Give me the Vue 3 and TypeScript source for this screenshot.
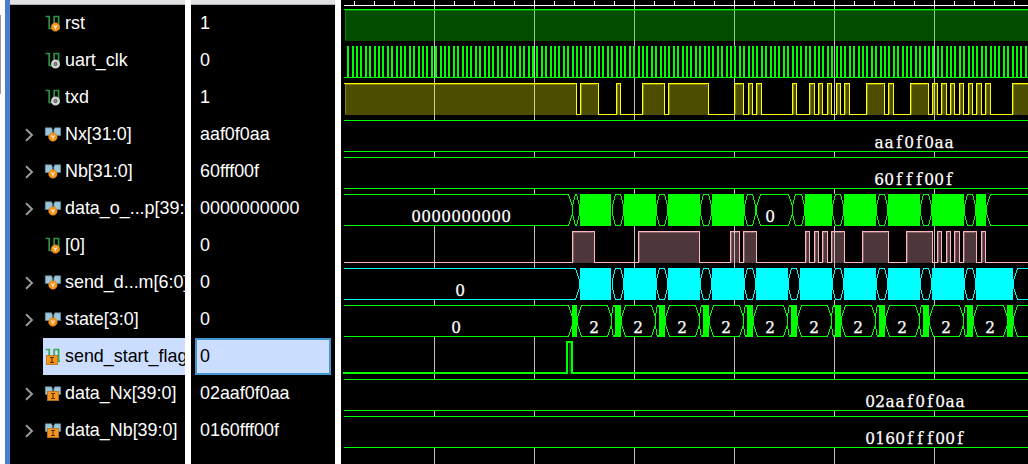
<script setup lang="ts">
type Icon = 'bit' | 'bus'
type Badge = 'v' | 'o' | 'i'
interface Signal {
  name: string
  value: string
  icon: Icon
  badge: Badge
  selected?: boolean
}

const signals: Signal[] = [
  { name: 'rst', value: '1', icon: 'bit', badge: 'v' },
  { name: 'uart_clk', value: '0', icon: 'bit', badge: 'o' },
  { name: 'txd', value: '1', icon: 'bit', badge: 'o' },
  { name: 'Nx[31:0]', value: 'aaf0f0aa', icon: 'bus', badge: 'v' },
  { name: 'Nb[31:0]', value: '60fff00f', icon: 'bus', badge: 'v' },
  { name: 'data_o_...p[39:0]', value: '0000000000', icon: 'bus', badge: 'v' },
  { name: '[0]', value: '0', icon: 'bit', badge: 'v' },
  { name: 'send_d...m[6:0]', value: '0', icon: 'bus', badge: 'v' },
  { name: 'state[3:0]', value: '0', icon: 'bus', badge: 'v' },
  { name: 'send_start_flag', value: '0', icon: 'bit', badge: 'i', selected: true },
  { name: 'data_Nx[39:0]', value: '02aaf0f0aa', icon: 'bus', badge: 'i' },
  { name: 'data_Nb[39:0]', value: '0160fff00f', icon: 'bus', badge: 'i' },
]

const END = 1030
const top = (row: number) => 9 + 37 * row
const grid = [434, 534, 634, 734, 834, 934]
const ticks = Array.from({ length: 34 }, (_, i) => 354 + 20 * i)
const clock = Array.from({ length: 155 }, (_, i) => Math.floor(347.6 + 4.4 * i + 0.001))

type Span = [number, number]
interface Level { row: number; color: string; spans: Span[] }

const levels: Level[] = [
  { row: 0, color: '#00ff00', spans: [[344, END]] },
  {
    row: 2, color: '#ffff00',
    spans: [[344, 576], [580, 598], [616, 620], [642, 664], [668, 708], [734, 743], [748, 752], [756, 761],
      [792, 796], [809, 814], [818, 822], [827, 831], [836, 840], [844, 849], [866, 884], [888, 893], [910, 928],
      [932, 937], [941, 946], [950, 954], [959, 963], [968, 972], [976, 981], [985, 990], [1012, END]],
  },
  {
    row: 6, color: '#ffb6c1',
    spans: [[572, 594], [638, 699], [730, 739], [743, 756], [805, 809], [814, 818], [822, 827], [831, 844],
      [862, 888], [906, 932], [937, 941], [946, 950], [954, 959], [963, 976], [981, 985]],
  },
]

interface Bar { x: number; y: number; w: number; h: number }

// One-pixel bars that trace a level signal: baseline pieces, plateaus and edges.
function levelBars(l: Level): Bar[] {
  const hi = top(l.row)
  const lo = hi + 31
  const out: Bar[] = []
  let x = 344
  for (const [a, b] of l.spans) {
    if (a > x) out.push({ x, y: lo, w: a - x, h: 1 })
    out.push({ x: a, y: hi, w: b - a + 1, h: 1 })
    if (a !== 344) out.push({ x: a, y: hi, w: 1, h: 32 })
    if (b !== END) out.push({ x: b, y: hi, w: 1, h: 32 })
    x = b
  }
  if (x < END) out.push({ x, y: lo, w: END - x, h: 1 })
  return out
}

interface Bus { row: number; color: string; cells: Span[]; solid: Span[] }
const gaps = (from: number, to: number): Span[] => {
  const out: Span[] = []
  for (let x = from; x <= to; x += 44) out.push([x, x + 11])
  return out
}
const stateCells: Span[] = Array.from({ length: 10 }, (_, i) => [577 + 44 * i, 611 + 44 * i] as Span)

const buses: Bus[] = [
  { row: 3, color: '#00ff00', cells: [[300, 1100]], solid: [] },
  { row: 4, color: '#00ff00', cells: [[300, 1100]], solid: [] },
  {
    row: 5, color: '#00ff00',
    cells: [[300, 572], [572, 579], ...gaps(612, 744), [756, 792], [792, 804], ...gaps(832, 964), [986, 1100]],
    solid: [[580, 611], [624, 656], [668, 700], [712, 744], [805, 832], [844, 876], [888, 920], [932, 964], [976, 986]],
  },
  {
    row: 7, color: '#00ffff',
    cells: [[300, 579], ...gaps(612, 964), [1013, 1100]],
    solid: [[580, 611], [624, 656], [668, 700], [712, 744], [756, 788], [800, 832], [844, 876], [888, 920], [932, 964], [976, 1013]],
  },
  {
    row: 8, color: '#00ff00',
    cells: [[300, 572], ...stateCells, ...Array.from({ length: 9 }, (_, i) => [611 + 44 * i, 616 + 44 * i] as Span), [1013, 1100]],
    solid: [[572, 577], ...Array.from({ length: 9 }, (_, i) => [615 + 44 * i, 621 + 44 * i] as Span), [1007, 1013]],
  },
  { row: 10, color: '#00ff00', cells: [[300, 1100]], solid: [] },
  { row: 11, color: '#00ff00', cells: [[300, 1100]], solid: [] },
]

function cellInset([a, b]: Span): number {
  return b - a <= 13 ? Math.min(3, (b - a) / 2 - 0.5) : 4
}

// Slanted left and right ends of a bus cell.
function cellPath([a, b]: Span, row: number): string {
  const t = top(row) + 0.5
  const s = cellInset([a, b])
  const l = a + 0.5
  const r = b + 0.5
  const k = s - 1
  return `M${l + s} ${t}L${l + k} ${t + 3}L${l} ${t + 12}V${t + 19}L${l + k} ${t + 28}L${l + s} ${t + 31}` +
    `M${r - s} ${t}L${r - k} ${t + 3}L${r} ${t + 12}V${t + 19}L${r - k} ${t + 28}L${r - s} ${t + 31}`
}

// Horizontal extent of a cell's top and bottom lines, clipped to the pane.
function cellFlat(c: Span): { x: number; w: number } {
  const s = cellInset(c)
  const x = Math.max(344, c[0] + s)
  return { x, w: Math.max(1, Math.min(1028, c[1] - s + 1) - x) }
}

interface Label { row: number; x: number; text: string }
const labels: Label[] = [
  { row: 3, x: 879, text: 'aaf0f0aa' },
  { row: 4, x: 879, text: '60fff00f' },
  { row: 5, x: 416, text: '0000000000' },
  { row: 5, x: 770, text: '0' },
  { row: 7, x: 460, text: '0' },
  { row: 8, x: 456, text: '0' },
  ...Array.from({ length: 10 }, (_, i) => ({ row: 8, x: 594 + 44 * i, text: '2' })),
  { row: 10, x: 870, text: '02aaf0f0aa' },
  { row: 11, x: 870, text: '0160fff00f' },
]
const charX = (l: Label) => [...l.text].map((_, i) => l.x + 10 * i).join(' ')
</script>

<template>
  <div class="viewer">
    <div class="edge"><i class="edge-line"></i></div>
    <div class="accent"></div>

    <div class="col names">
      <div class="head"></div>
      <div v-for="s in signals" :key="s.name" class="row">
        <span class="twist">
          <svg v-if="s.icon === 'bus'" width="9" height="14" viewBox="0 0 9 14">
            <path d="M1 1.2L7 7L1 12.8" fill="none" stroke="#9c9c9c" stroke-width="1.9" />
          </svg>
        </span>
        <span class="name" :class="{ selected: s.selected }">
          <svg class="icon" width="18" height="18" viewBox="0 0 18 18">
            <g v-if="s.icon === 'bit'" fill="none" :stroke="s.selected ? '#35a853' : '#2f9144'" stroke-width="1.7">
              <path d="M1.6 1.5H5.2V13.5H10.2V1.5H14.6V13.5H16" />
            </g>
            <g v-else fill="#9bc5d9" stroke="#6f8b99" stroke-width="0.6">
              <path d="M1.3 1.8H7.6L8.4 4V9.5H1.3Z" />
              <path d="M16.6 1.8H10.8L9.8 4V9.5H16.6Z" />
            </g>
            <g v-if="s.badge === 'v'" :transform="s.icon === 'bit' ? 'translate(11.4 12)' : 'translate(8.9 11)'">
              <circle r="4.3" fill="#f7941e" stroke="#d07c12" stroke-width="0.5" />
              <path d="M-1.7 -1.8L0 0.6L1.7 -1.8M0 0.4V2.2" fill="none" stroke="#fff0d8" stroke-width="1.1" />
            </g>
            <g v-else-if="s.badge === 'o'" transform="translate(11.5 12)">
              <circle r="3.2" fill="#555" stroke="#d2d2d2" stroke-width="2.5" />
              <circle r="1" fill="#999" />
            </g>
            <g v-else :transform="s.icon === 'bit' ? 'translate(-1 1)' : ''">
              <rect x="3.4" y="6.4" width="11.2" height="9.2" fill="#f7941e" stroke="#b8731c" stroke-width="0.8" />
              <path d="M7 8.5H11M9 8.5V13.5M7 13.5H11" fill="none" stroke="#50320c" stroke-width="1.1" />
            </g>
          </svg>
          <span class="text">{{ s.name }}</span>
        </span>
      </div>
    </div>

    <div class="divider"></div>

    <div class="col values">
      <div class="head"></div>
      <div v-for="s in signals" :key="s.name" class="row value" :class="{ selected: s.selected }">
        <span class="text">{{ s.value }}</span>
      </div>
    </div>

    <div class="divider"></div>

    <svg class="wave" width="687" height="464" viewBox="341 0 687 464" shape-rendering="crispEdges">
      <rect v-for="x in grid" :key="'g' + x" :x="x" y="0" width="1" height="464" fill="#c0c0c0" />
      <rect v-for="x in ticks" :key="'t' + x" :x="x" y="1" width="1" height="4" fill="#fff" />
      <rect x="344" y="5" width="684" height="1" fill="#fff" />

      <rect v-for="x in clock" :key="'c' + x" :x="x" y="46" width="2" height="32" fill="#00ff00" />
      <rect x="344" y="77" width="684" height="1" fill="#00ff00" />

      <g v-for="l in levels" :key="'l' + l.row">
        <template v-for="([a, b], i) in l.spans" :key="i">
          <rect :x="a + 1" :y="top(l.row) + 1" :width="b - a - 1" height="31" :fill="l.color" fill-opacity="0.3" />
          <path :d="`M${a + 1.5} ${top(l.row) + 31}V${top(l.row) + 1.5}H${b - 1}`" fill="none" :stroke="l.color" stroke-opacity="0.32" />
        </template>
        <rect v-for="(r, i) in levelBars(l)" :key="'r' + i" :x="r.x" :y="r.y" :width="r.w" :height="r.h" :fill="l.color" />
      </g>

      <g v-for="b in buses" :key="'b' + b.row">
        <rect x="344" :y="top(b.row)" width="684" height="32" fill="#000" />
        <template v-for="(c, i) in b.cells" :key="i">
          <rect :x="cellFlat(c).x" :y="top(b.row)" :width="cellFlat(c).w" height="1" :fill="b.color" />
          <rect :x="cellFlat(c).x" :y="top(b.row) + 31" :width="cellFlat(c).w" height="1" :fill="b.color" />
          <path :d="cellPath(c, b.row)" class="slant" :stroke="b.color" />
        </template>
        <rect v-for="([s, e], i) in b.solid" :key="'s' + i" :x="s" :y="top(b.row)" :width="e - s" height="32" :fill="b.color" />
      </g>

      <rect x="569" y="343" width="2" height="31" fill="#00ff00" fill-opacity="0.3" />
      <path d="M343 373H567V342H572V373H1028" fill="none" stroke="#00ff00" stroke-width="2" />

      <text v-for="(l, i) in labels" :key="'x' + i" class="label" :x="charX(l)" :y="top(l.row) + 28">{{ l.text }}</text>
    </svg>
  </div>
</template>

<style scoped>
.viewer {
  display: flex;
  width: 1028px;
  height: 464px;
  overflow: hidden;
  background: #000;
  font-family: "Liberation Sans", Arial, sans-serif;
  font-size: 17.9px;
  color: #fff;
}
.edge {
  width: 5px;
  flex: none;
  background: #fff;
  padding-top: 15px;
  box-sizing: border-box;
}
.edge-line {
  display: block;
  width: 1px;
  height: 79px;
  background: #999;
}
.accent {
  width: 5px;
  flex: none;
  background: #4a7dcc;
}
.col {
  flex: none;
  overflow: hidden;
  background: #000;
}
.names {
  width: 175px;
}
.values {
  width: 144px;
}
.divider {
  width: 6px;
  flex: none;
  background: #fff;
}
.head {
  height: 5px;
  box-sizing: border-box;
  background: #e1e1e4;
  border-bottom: 1px solid #b4b4b8;
}
.row {
  display: flex;
  height: 37px;
  align-items: center;
  white-space: nowrap;
}
.twist {
  display: flex;
  width: 33px;
  flex: none;
  box-sizing: border-box;
  padding: 0 0 0 15px;
}
.name {
  display: flex;
  flex: 1 0 auto;
  height: 37px;
  align-items: center;
}
.icon {
  flex: none;
  margin: 0 3px 0 1px;
}
.text {
  line-height: 20px;
  padding-bottom: 1px;
}
.value {
  box-sizing: border-box;
  margin: 0 4px;
  padding-left: 5px;
}
.selected {
  background: #cbdeff;
  color: #000;
}
.value.selected {
  border: 2px solid #4296d2;
  padding-left: 3px;
}
.wave {
  flex: none;
  display: block;
}
.slant {
  fill: none;
}
.label {
  font-family: "DejaVu Serif Condensed", "DejaVu Serif", serif;
  font-stretch: condensed;
  font-size: 17px;
  text-anchor: middle;
  fill: #fff;
  stroke: #fff;
  stroke-width: 0.25px;
}
</style>

<style>
body {
  background: #000;
}
</style>
